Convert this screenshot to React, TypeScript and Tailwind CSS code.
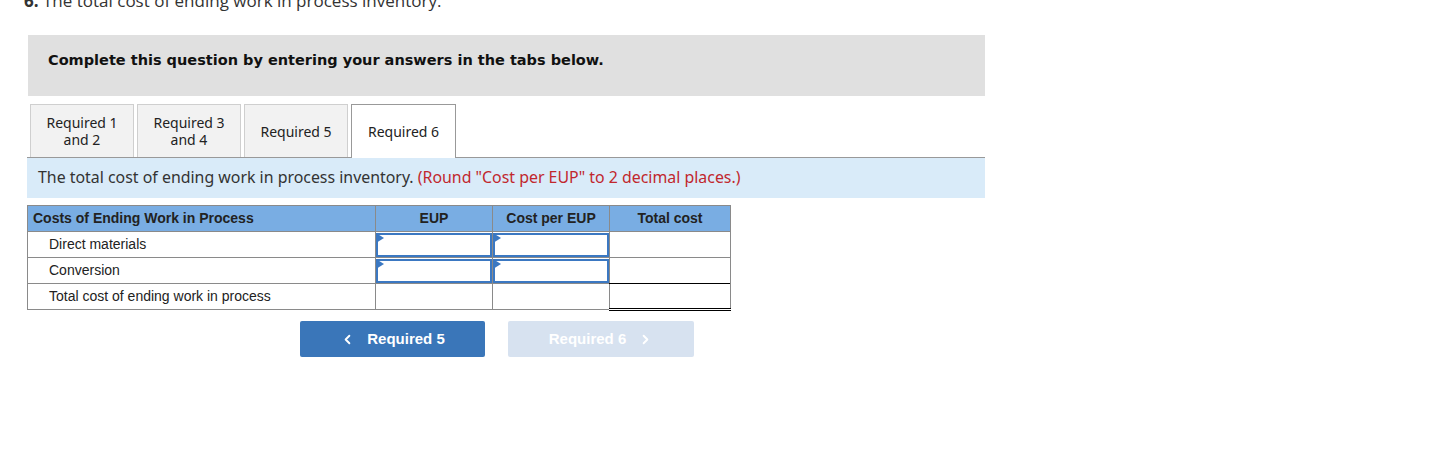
import { ChevronLeft, ChevronRight } from 'lucide-react';

const tabs = [
  { label: ['Required 1', 'and 2'], active: false },
  { label: ['Required 3', 'and 4'], active: false },
  { label: ['Required 5'], active: false },
  { label: ['Required 6'], active: true },
];

function InputCell() {
  return (
    <td className="border border-[#8a8a8a] p-0">
      <div className="relative h-[24px] border-2 border-[#3b78c2] bg-white">
        <span className="absolute left-[-2px] top-[-2px] w-0 h-0 border-y-[5px] border-y-transparent border-l-[8px] border-l-[#3b78c2]" />
      </div>
    </td>
  );
}

export default function App() {
  const rows = ['Direct materials', 'Conversion'];

  return (
    <div className="w-[1442px] h-[462px] bg-white overflow-hidden">
      <p className="ml-[24px] -mt-[9px] h-[20px] text-[17px] leading-[20px] text-[#333] font-['Open_Sans',sans-serif]">
        <b>6.</b> The total cost of ending work in process inventory.
      </p>

      <div className="ml-[28px] mt-[24px] w-[957px] h-[61px] bg-[#e0e0e0] pl-[20px] pt-[13px] text-[14.5px] leading-[24px] font-bold text-[#111] font-['DejaVu_Sans',sans-serif]">
        Complete this question by entering your answers in the tabs below.
      </div>

      <div className="ml-[27px] mt-[8px] w-[958px]">
        <div className="flex items-end gap-[3px] pl-[3px] h-[54px] border-b border-[#999]">
          {tabs.map((t) => (
            <div
              key={t.label.join(' ')}
              className={
                t.active
                  ? 'w-[105px] h-[54px] -mb-px bg-white border border-b-0 border-[#999] flex flex-col items-center justify-center text-[14px] leading-[17px] text-[#222] font-["Noto_Sans",sans-serif]'
                  : 'w-[104px] h-[53px] bg-[#f2f2f2] border border-b-0 border-[#cfcfcf] flex flex-col items-center justify-center text-[14px] leading-[17px] text-[#222] font-["Noto_Sans",sans-serif]'
              }
            >
              {t.label.map((l) => (
                <span key={l}>{l}</span>
              ))}
            </div>
          ))}
        </div>

        <div className="h-[40px] bg-[#d9ebf9] pl-[11px] flex items-center text-[15.9px] text-[#333] font-['Noto_Sans',sans-serif]">
          <span>
            The total cost of ending work in process inventory.{' '}
            <span className="text-[#c1272d]">(Round "Cost per EUP" to 2 decimal places.)</span>
          </span>
        </div>

        <table className="mt-[7px] w-[703px] border-collapse table-fixed text-[14px] text-[#222] font-['Liberation_Sans',Arial,sans-serif]">
          <colgroup>
            <col className="w-[348px]" />
            <col className="w-[117px]" />
            <col className="w-[117px]" />
            <col className="w-[121px]" />
          </colgroup>
          <thead>
            <tr className="bg-[#79ade3] h-[26px] font-bold">
              <th className="border border-[#8a8a8a] text-left pl-[5px]">Costs of Ending Work in Process</th>
              <th className="border border-[#8a8a8a]">EUP</th>
              <th className="border border-[#8a8a8a]">Cost per EUP</th>
              <th className="border border-[#8a8a8a]">Total cost</th>
            </tr>
          </thead>
          <tbody>
            {rows.map((r, i) => (
              <tr key={r} className="h-[26px]">
                <td className="border border-[#8a8a8a] pl-[21px]">{r}</td>
                <InputCell />
                <InputCell />
                <td className={i === 1 ? 'border border-[#8a8a8a] border-b-black' : 'border border-[#8a8a8a]'} />
              </tr>
            ))}
            <tr className="h-[26px]">
              <td className="border border-[#8a8a8a] pl-[21px]">Total cost of ending work in process</td>
              <td className="border border-[#8a8a8a]" />
              <td className="border border-[#8a8a8a]" />
              <td className="border border-[#8a8a8a] border-t-black border-b-[3px] border-b-black border-double" />
            </tr>
          </tbody>
        </table>

        <div className="flex gap-[23px] ml-[273px] mt-[10px] font-['Liberation_Sans',Arial,sans-serif] text-[15px] font-bold text-white">
          <div className="w-[185px] h-[36px] rounded-[2px] bg-[#3a76b9] flex items-center justify-center gap-[12px]">
            <ChevronLeft size={15} strokeWidth={3} />
            <span>Required 5</span>
          </div>
          <div className="w-[186px] h-[36px] rounded-[2px] bg-[#d7e2f0] flex items-center justify-center gap-[12px]">
            <span>Required 6</span>
            <ChevronRight size={15} strokeWidth={3} />
          </div>
        </div>
      </div>
    </div>
  );
}
